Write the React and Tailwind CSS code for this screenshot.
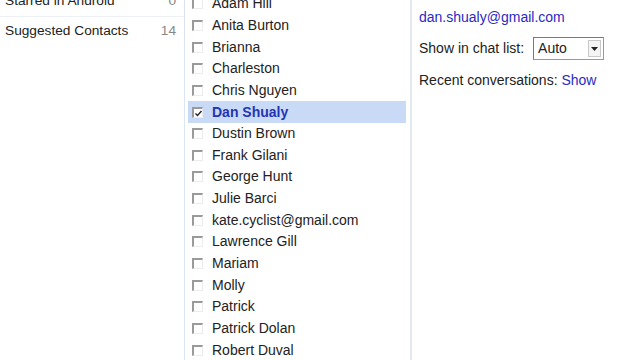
import React from "react";

const contacts = [
  "Adam Hill",
  "Anita Burton",
  "Brianna",
  "Charleston",
  "Chris Nguyen",
  "Dan Shualy",
  "Dustin Brown",
  "Frank Gilani",
  "George Hunt",
  "Julie Barci",
  "kate.cyclist@gmail.com",
  "Lawrence Gill",
  "Mariam",
  "Molly",
  "Patrick",
  "Patrick Dolan",
  "Robert Duval",
];

function Checkbox({ checked }) {
  return (
    <span className="relative w-[11px] h-[11px] shrink-0 bg-white border-t-2 border-l-2 border-t-[#9a9a9a] border-l-[#9a9a9a] border-r border-b border-r-[#ececec] border-b-[#ececec]">
      {checked && (
        <svg className="absolute left-[0px] top-[0px]" width="9" height="9" viewBox="0 0 9 9">
          <path d="M1.5 4.5 L3.5 6.5 L7.5 2" fill="none" stroke="#222" strokeWidth="1.4" />
        </svg>
      )}
    </span>
  );
}

export default function App() {
  return (
    <div
      className="flex w-[640px] h-[360px] overflow-hidden bg-white text-[14px] text-[#222]"
      style={{ fontFamily: '"Liberation Sans", Arial, sans-serif' }}
    >
      {/* Groups */}
      <div className="w-[185px] shrink-0 border-r border-[#dce5f2] -mt-[13px] text-[13.7px]">
        <div className="flex items-center justify-between h-[29px] pl-[5px] pr-[8px]">
          <span>Starred in Android</span>
          <span className="text-[#888]">0</span>
        </div>
        <div className="flex items-center justify-between h-[29px] pl-[5px] pr-[8px] border-t border-[#edf0f5]">
          <span>Suggested Contacts</span>
          <span className="text-[#888]">14</span>
        </div>
      </div>

      {/* Contact list */}
      <div className="w-[225px] shrink-0 pl-[3px] pr-[4px] -mt-[7px]">
        {contacts.map((name) => {
          const selected = name === "Dan Shualy";
          return (
            <div
              key={name}
              className={
                "flex items-center gap-[9px] h-[21.65px] pl-[4px] " +
                (selected ? "bg-[#c9daf7] font-bold text-[#2434b4]" : "")
              }
            >
              <Checkbox checked={selected} />
              <span>{name}</span>
            </div>
          );
        })}
      </div>

      {/* Details */}
      <div className="flex-1 border-l-2 border-[#e3e9f1] pl-[7px]">
        <div className="-mt-[19px] h-[28px] text-[16px] font-bold leading-[20px]">Dan Shualy</div>
        <div className="text-[#2a2ac4] leading-[17px]">dan.shualy@gmail.com</div>
        <div className="flex items-center gap-[9px] mt-[11px]">
          <span>Show in chat list:</span>
          <div className="flex items-center w-[71px] h-[23px] border border-[#9a9a9a] border-t-[#7a7a7a] border-l-[#7a7a7a] bg-white">
            <span className="flex-1 pl-[4px]">Auto</span>
            <span className="w-[13px] h-[17px] mr-[2px] border border-[#c8c8c8] bg-[#f4f4f4] flex items-center justify-center">
              <svg width="7" height="4" viewBox="0 0 7 4">
                <path d="M0 0 H7 L3.5 4 Z" fill="#222" />
              </svg>
            </span>
          </div>
        </div>
        <div className="mt-[10px]">
          Recent conversations: <span className="text-[#2a2ac4]">Show</span>
        </div>
      </div>
    </div>
  );
}
